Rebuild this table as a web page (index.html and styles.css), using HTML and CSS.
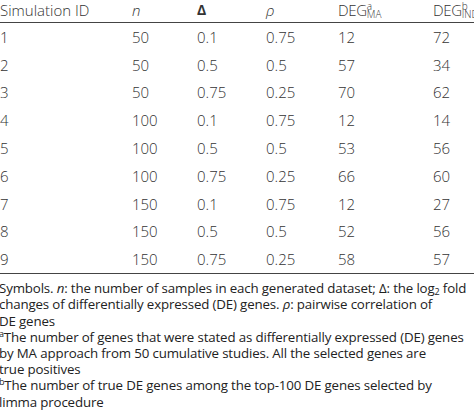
FILE: index.html
```html
<!DOCTYPE html>
<html>
<head>
<meta charset="utf-8">
<link rel="stylesheet" href="styles.css">
</head>
<body>
<div class="table">
  <div class="row head">
    <span>Simulation ID</span>
    <span><i>n</i></span>
    <span class="delta">Δ</span>
    <span><i>ρ</i></span>
    <span class="deg">DEG<span class="ss"><span class="sup">a</span><span class="sub">MA</span></span></span>
    <span class="deg">DEG<span class="ss"><span class="sup">b</span><span class="sub">IND</span></span></span>
  </div>
  <div class="body">
    <div class="row"><span>1</span><span>50</span><span>0.1</span><span>0.75</span><span>12</span><span>72</span></div>
    <div class="row"><span>2</span><span>50</span><span>0.5</span><span>0.5</span><span>57</span><span>34</span></div>
    <div class="row"><span>3</span><span>50</span><span>0.75</span><span>0.25</span><span>70</span><span>62</span></div>
    <div class="row"><span>4</span><span>100</span><span>0.1</span><span>0.75</span><span>12</span><span>14</span></div>
    <div class="row"><span>5</span><span>100</span><span>0.5</span><span>0.5</span><span>53</span><span>56</span></div>
    <div class="row"><span>6</span><span>100</span><span>0.75</span><span>0.25</span><span>66</span><span>60</span></div>
    <div class="row"><span>7</span><span>150</span><span>0.1</span><span>0.75</span><span>12</span><span>27</span></div>
    <div class="row"><span>8</span><span>150</span><span>0.5</span><span>0.5</span><span>52</span><span>56</span></div>
    <div class="row"><span>9</span><span>150</span><span>0.75</span><span>0.25</span><span>58</span><span>57</span></div>
  </div>
</div>
<div class="notes">
  <p>Symbols. <i>n</i>: the number of samples in each generated dataset; Δ: the log<sub>2</sub> fold<br>changes of differentially expressed (DE) genes. <i>ρ</i>: pairwise correlation of<br>DE genes</p>
  <p><sup>a</sup>The number of genes that were stated as differentially expressed (DE) genes<br>by MA approach from 50 cumulative studies. All the selected genes are<br>true positives</p>
  <p><sup>b</sup>The number of true DE genes among the top-100 DE genes selected by<br>limma procedure</p>
</div>
</body>
</html>
```
FILE: styles.css
```css
html, body {
  margin: 0;
  padding: 0;
  background: #fff;
}
body {
  width: 474px;
  overflow: hidden;
  font-family: "Open Sans", "DejaVu Sans", sans-serif;
  color: #2a2a2a;
}
.table {
  font-weight: 300;
  font-size: 15px;
  color: #333;
}
.row {
  display: grid;
  grid-template-columns: 132px 65px 69px 72px 95px 1fr;
  align-items: center;
  white-space: nowrap;
}
.head {
  height: 22px;
  align-items: start;
  border-bottom: 1px solid #444;
  line-height: 20px;
}
.head .delta {
  font-weight: 700;
  font-size: 14px;
}
.body {
  border-bottom: 1px solid #444;
}
.body .row {
  height: 27.8px;
}
.deg {
  display: inline-flex;
  align-items: flex-start;
  letter-spacing: -0.3px;
}
.ss {
  display: inline-flex;
  flex-direction: column;
  font-size: 10px;
  line-height: 8px;
  margin-top: 2px;
  letter-spacing: 0;
}
.notes {
  font-size: 13.3px;
  line-height: 16.2px;
  letter-spacing: -0.15px;
  color: #222;
  padding-top: 6px;
  margin-left: -1px;
  white-space: nowrap;
}
.notes p {
  margin: 0;
}
.notes sub {
  font-size: 9px;
  line-height: 0;
  vertical-align: -2px;
}
.notes sup {
  font-size: 9px;
  line-height: 0;
  vertical-align: 5px;
}
```
